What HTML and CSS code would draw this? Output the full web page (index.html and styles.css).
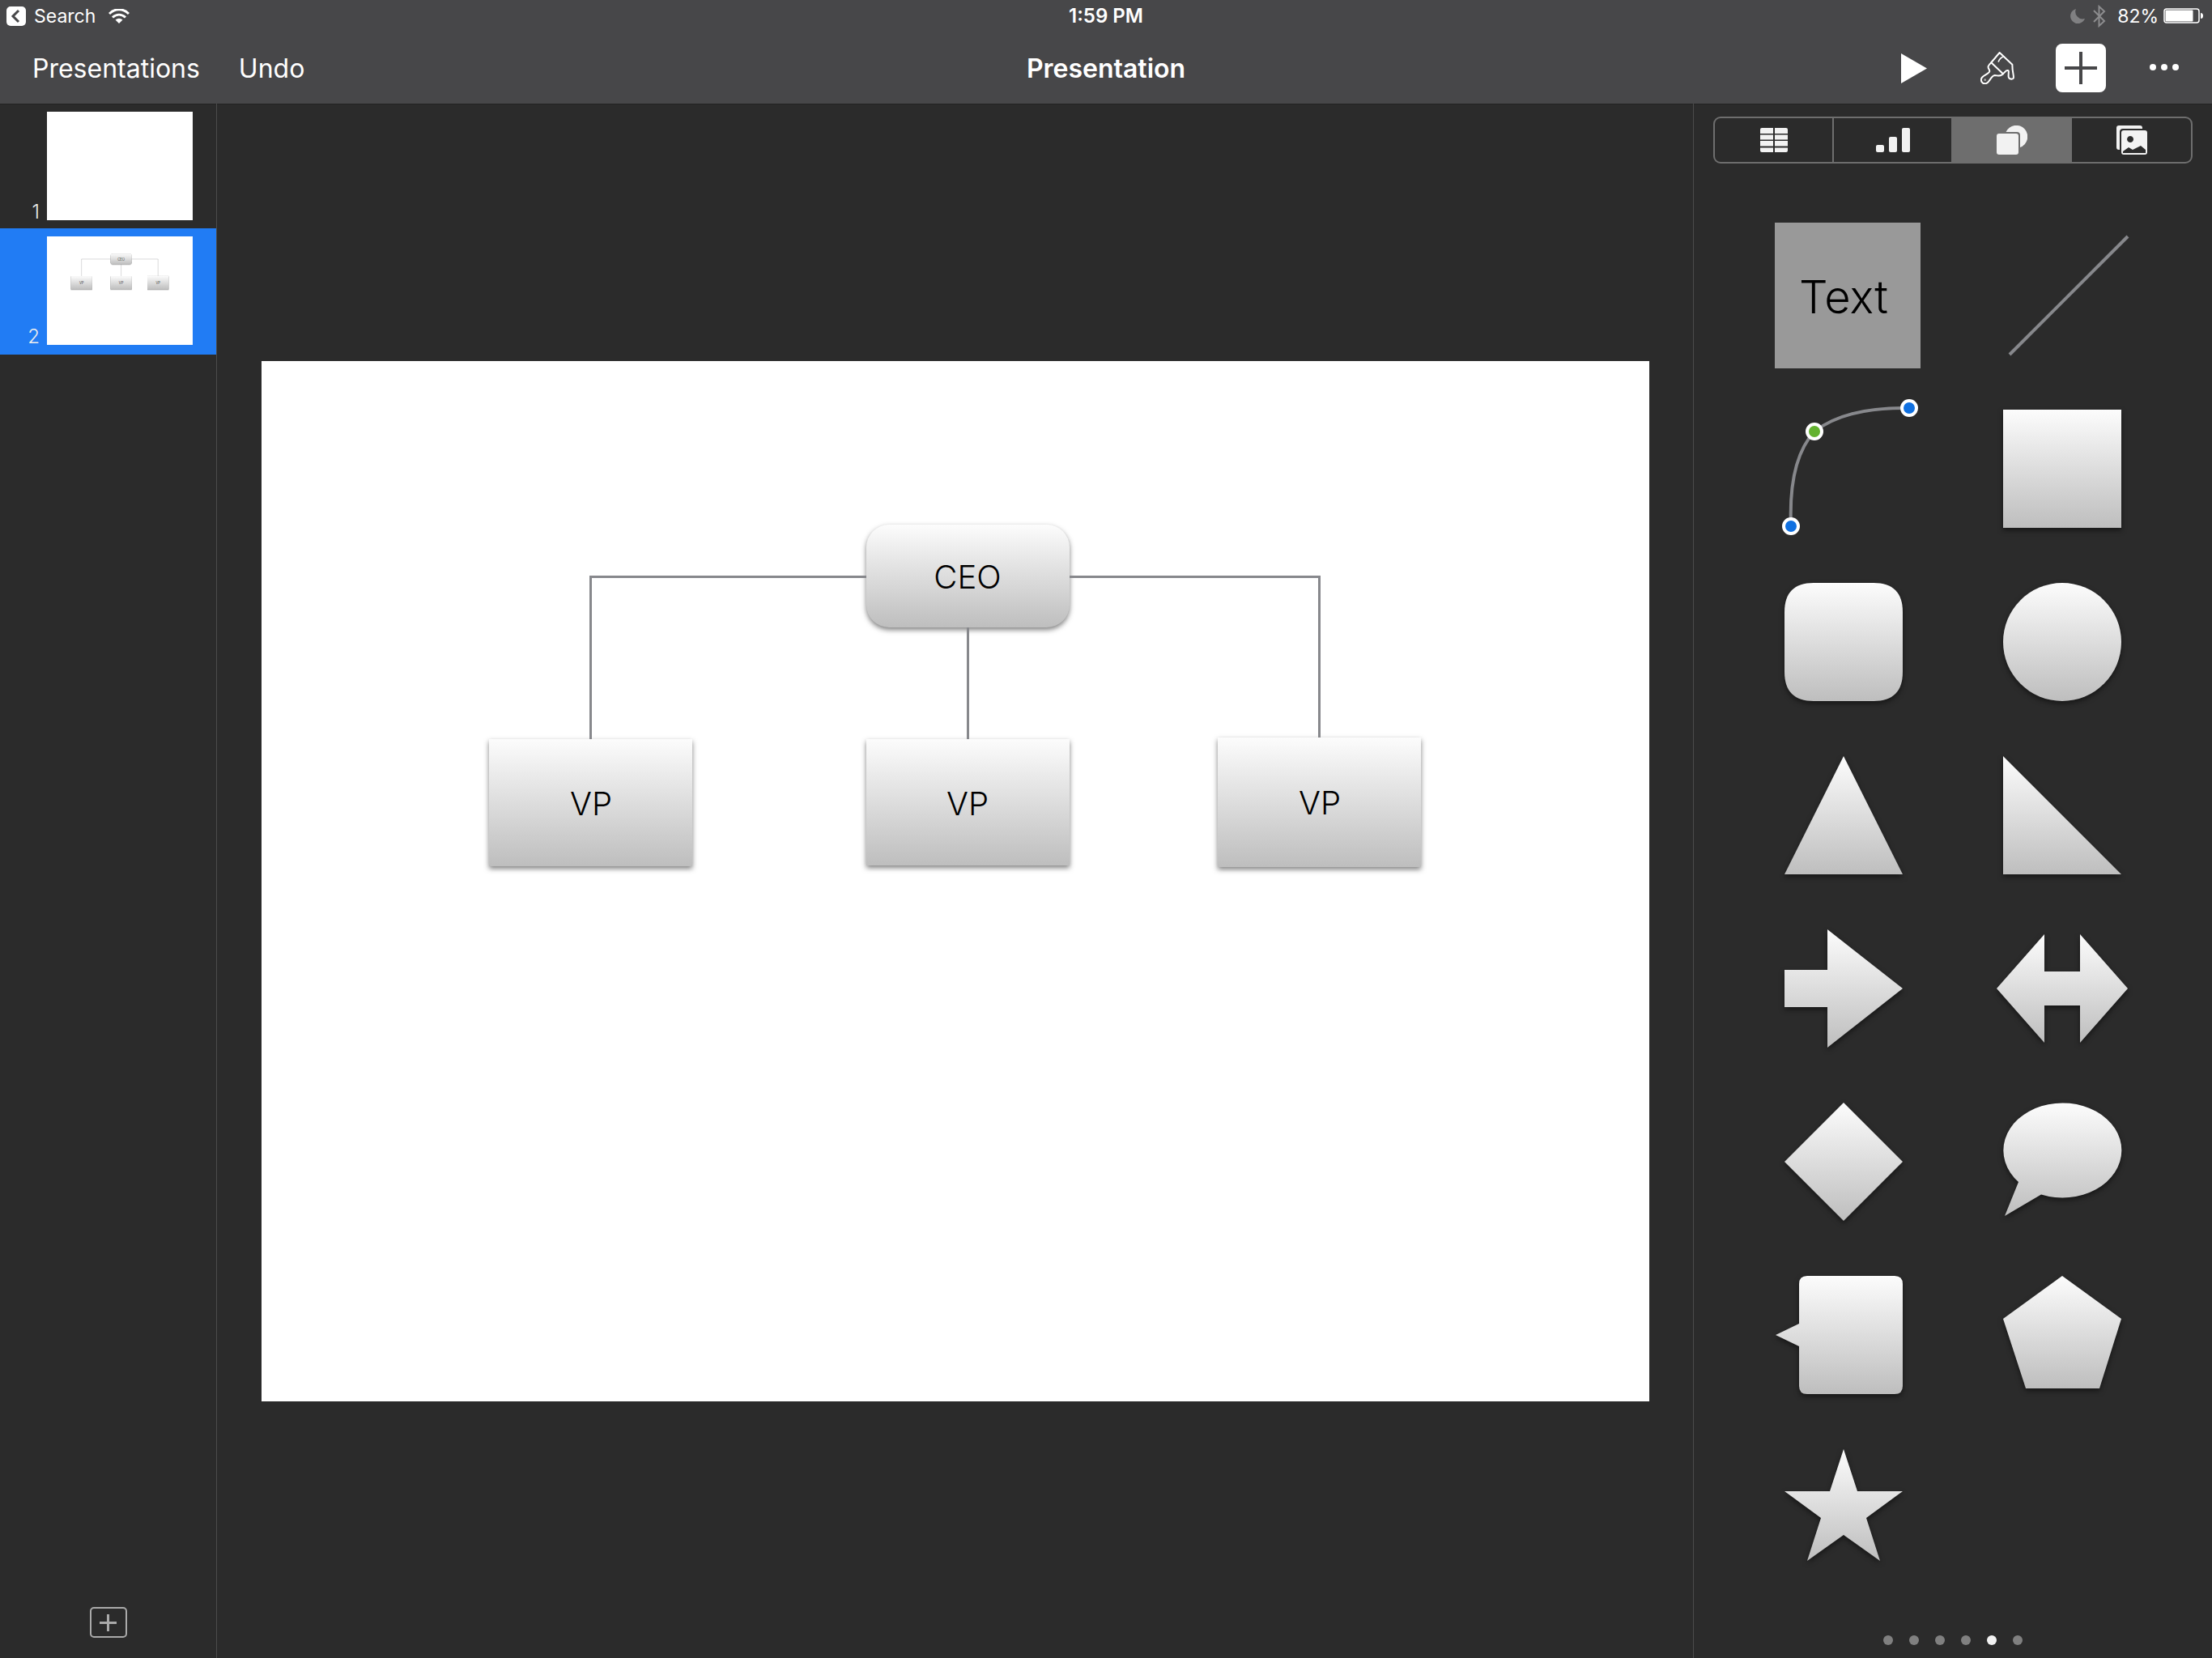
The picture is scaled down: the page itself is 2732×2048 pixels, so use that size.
FILE: index.html
```html
<!DOCTYPE html>
<html lang="en">
<head>
    <meta charset="UTF-8">
    <meta name="viewport" content="width=device-width, initial-scale=1.0">
    <title>Presentation</title>
    <link rel="stylesheet" href="styles.css">
</head>
<body>
    <!-- shared gradients and the org chart, drawn once and reused in the thumbnail -->
    <svg class="defs" width="0" height="0" aria-hidden="true">
        <defs>
            <linearGradient id="silver" x1="0" y1="0" x2="0" y2="1">
                <stop offset="0" stop-color="#fcfcfc"/>
                <stop offset="1" stop-color="#bebebe"/>
            </linearGradient>
            <symbol id="org-chart" viewBox="0 0 1714 1285">
                <g class="node">
                    <rect x="747" y="202" width="251" height="127" rx="28"/>
                    <rect x="281" y="467" width="251" height="157"/>
                    <rect x="747" y="467" width="251" height="156"/>
                    <rect x="1181" y="465" width="251" height="160"/>
                </g>
                <path class="connector" d="M747 266.500H406.500V467M998 266.500H1306.500V465M872.500 329V467"/>
                <g class="node-label">
                    <text x="872" y="281">CEO</text>
                    <text x="407" y="561">VP</text>
                    <text x="872" y="561">VP</text>
                    <text x="1307" y="560">VP</text>
                </g>
            </symbol>
        </defs>
    </svg>

    <header class="header">
        <div class="status-bar">
            <div class="status-left">
                <svg width="24" height="24" viewBox="0 0 24 24"><rect width="24" height="24" rx="5" fill="#fff"/><path d="M15 5L8 12l7 7" fill="none" stroke="#474749" stroke-width="3"/></svg>
                <a href="#" class="back-link">Search</a>
                <svg class="wifi" width="26" height="18" viewBox="0 0 26 18"><path d="M1 6C8-1 18-1 25 6M5 10.500c5-4.500 11-4.500 16 0" fill="none" stroke="#fff" stroke-width="3"/><path d="M13 18l-4.500-4.500q4.500-3.500 9 0z" fill="#fff"/></svg>
            </div>
            <div class="time">1:59 PM</div>
            <div class="status-right">
                <svg width="18" height="18" viewBox="0 0 18 18"><path d="M7 0A9.200 9.200 0 1 0 18 12A9 9 0 0 1 7 0z" fill="#808082"/></svg>
                <svg width="16" height="28" viewBox="0 0 16 28"><path d="M1 7l13 13-6.500 6V2L14 8 1 21" fill="none" stroke="#8c8c8e" stroke-width="2"/></svg>
                <span class="battery-level">82%</span>
                <svg width="50" height="20" viewBox="0 0 50 20"><rect x="1" y="1" width="43" height="17" rx="3" fill="none" stroke="#fff" stroke-width="1.500"/><rect x="2.500" y="2.500" width="34" height="14" rx="1" fill="#fff"/><path d="M46 6q3 0 3 3.500T46 13z" fill="#fff"/></svg>
            </div>
        </div>
        <div class="toolbar">
            <div class="toolbar-left">
                <button class="text-button">Presentations</button>
                <button class="text-button">Undo</button>
            </div>
            <h1 class="title">Presentation</h1>
            <div class="toolbar-right">
                <button class="icon-button" aria-label="Play">
                    <svg width="32" height="37" viewBox="0 0 32 37"><path d="M0 0l32 18.500L0 37z" fill="#fff"/></svg>
                </button>
                <button class="icon-button" aria-label="Format">
                    <svg width="42" height="40" viewBox="0 0 126 120"><g fill="none" stroke="#fff" stroke-width="6" stroke-linejoin="round" stroke-linecap="round"><path d="M71 3L118 47Q118 66 122 86C125 103 119 100 115 101C106 101 103 96 104 86C104 75 107 67 99 69C92 70 89 79 80 85C70 93 63 87 53 87C43 88 39 99 32 108C25 119 15 120 8 115C0 108 1 97 10 91C20 84 34 78 34 72C34 65 27 61 29 54Q31 48 38 42z"/><path d="M40 40L84 82"/><path d="M86 17Q71 23 67 36" stroke-width="5"/></g><circle cx="17" cy="104" r="4" fill="#aaa"/></svg>
                </button>
                <button class="icon-button active" aria-label="Insert">
                    <svg width="40" height="40" viewBox="0 0 40 40"><path d="M20 0v40M0 20h40" stroke="#474749" stroke-width="4"/></svg>
                </button>
                <button class="icon-button" aria-label="More">
                    <svg width="36" height="10" viewBox="0 0 36 10"><g fill="#fff"><circle cx="4" cy="4" r="4"/><circle cx="18" cy="4" r="4"/><circle cx="32" cy="4" r="4"/></g></svg>
                </button>
            </div>
        </div>
    </header>

    <div class="workspace">
        <nav class="navigator">
            <button class="slide-row">
                <span class="slide-number">1</span>
                <span class="thumb"></span>
            </button>
            <button class="slide-row selected">
                <span class="slide-number">2</span>
                <span class="thumb"><svg viewBox="0 0 1714 1285"><use href="#org-chart"/></svg></span>
            </button>
            <button class="add-slide" aria-label="Add slide">
                <svg width="21" height="21" viewBox="0 0 21 21"><path d="M10.500 0v21M0 10.500h21" stroke="#aaa" stroke-width="3"/></svg>
            </button>
        </nav>

        <main class="canvas">
            <div class="slide">
                <svg viewBox="0 0 1714 1285"><use href="#org-chart"/></svg>
            </div>
        </main>

        <aside class="inspector">
            <div class="segments">
                <button class="segment" aria-label="Tables">
                    <svg width="34" height="30" viewBox="0 0 34 30"><path d="M2 0h14v7H0V2q0-2 2-2zM18 0h14q2 0 2 2v5H18zM0 8.500h16v6H0zM18 8.500h16v6H18zM0 16h16v6.500H0zM18 16h16v6.500H18zM0 24.500h16V30H2q-2 0-2-2zM18 24.500h16V28q0 2-2 2H18z"/></svg>
                </button>
                <button class="segment" aria-label="Charts">
                    <svg width="42" height="30" viewBox="0 0 42 30"><rect y="21" width="10" height="9" rx="2"/><rect x="16" y="11" width="10" height="19" rx="2"/><rect x="32" width="10" height="30" rx="2"/></svg>
                </button>
                <button class="segment active" aria-label="Shapes">
                    <svg width="38" height="36" viewBox="0 0 38 36"><path d="M11.500 8A14 14 0 1 1 29 27V12q0-4-4-4z"/><rect y="10" width="27" height="26" rx="3"/></svg>
                </button>
                <button class="segment" aria-label="Media">
                    <svg width="38" height="36" viewBox="0 0 38 36"><path d="M3 0h26q3 0 3 3v1H8q-4 0-4 4v22H3q-3 0-3-3V3q0-3 3-3z"/><path fill-rule="evenodd" d="M9 6h26q3 0 3 3v24q0 3-3 3H9q-3 0-3-3V9q0-3 3-3zM17 13a4 4 0 1 0 .1 0zM8 34h28v-4l-6-5-10 5-5-3-7 5z"/></svg>
                </button>
            </div>

            <div class="shapes">
                <button class="shape" aria-label="Text box">
                    <span class="text-tile">Text</span>
                </button>
                <button class="shape" aria-label="Line">
                    <svg viewBox="0 0 146 146"><path class="stroke" d="M8 146L154 0"/></svg>
                </button>
                <button class="shape" aria-label="Curve">
                    <svg viewBox="0 0 146 146">
                        <path class="stroke" d="M8 144C6 95 13 53 37 27C60 9 97-3 154-2"/>
                        <g class="handle">
                            <circle cx="8" cy="144" r="9"/>
                            <circle class="mid" cx="37" cy="27" r="9"/>
                            <circle cx="154" cy="-2" r="9"/>
                        </g>
                    </svg>
                </button>
                <button class="shape" aria-label="Rectangle">
                    <svg class="solid" viewBox="0 0 146 146"><rect width="146" height="146"/></svg>
                </button>
                <button class="shape" aria-label="Rounded rectangle">
                    <svg class="solid" viewBox="0 0 146 146"><path d="M36 0H110C134 0 146 12 146 36V110C146 134 134 146 110 146H36C12 146 0 134 0 110V36C0 12 12 0 36 0z"/></svg>
                </button>
                <button class="shape" aria-label="Oval">
                    <svg class="solid" viewBox="0 0 146 146"><circle cx="73" cy="73" r="73"/></svg>
                </button>
                <button class="shape" aria-label="Triangle">
                    <svg class="solid" viewBox="0 0 146 146"><path d="M73 0l73 146H0z"/></svg>
                </button>
                <button class="shape" aria-label="Right triangle">
                    <svg class="solid" viewBox="0 0 146 146"><path d="M0 0l146 146H0z"/></svg>
                </button>
                <button class="shape" aria-label="Arrow">
                    <svg class="solid" viewBox="0 0 146 146"><path d="M0 50h53V0l93 73-93 73V96H0z"/></svg>
                </button>
                <button class="shape" aria-label="Double arrow">
                    <svg class="solid" viewBox="0 0 146 146"><path d="M-8 73L51 6v46h44V6l59 67-59 67V94H51v46z"/></svg>
                </button>
                <button class="shape" aria-label="Diamond">
                    <svg class="solid" viewBox="0 0 146 146"><path d="M73 0l73 73-73 73L0 73z"/></svg>
                </button>
                <button class="shape" aria-label="Speech bubble">
                    <svg class="solid" viewBox="0 0 146 146"><path d="M19 98A73 58.500 0 1 1 47 113.500L2 140z"/></svg>
                </button>
                <button class="shape" aria-label="Callout">
                    <svg class="solid" viewBox="0 0 146 146"><path d="M28 0h108q10 0 10 10v126q0 10-10 10H28q-10 0-10-10V87l-29-14 29-14V10Q18 0 28 0z"/></svg>
                </button>
                <button class="shape" aria-label="Pentagon">
                    <svg class="solid" viewBox="0 0 146 146"><path d="M73 0l73 53-27 86H28L0 53z"/></svg>
                </button>
                <button class="shape" aria-label="Star">
                    <svg class="solid" viewBox="0 0 146 146"><path d="M73 0l17 52h56l-45 33 17 53-45-32-45 32 17-53L0 52h56z"/></svg>
                </button>
            </div>

            <div class="pager">
                <button class="dot" aria-label="Page 1"></button>
                <button class="dot" aria-label="Page 2"></button>
                <button class="dot" aria-label="Page 3"></button>
                <button class="dot" aria-label="Page 4"></button>
                <button class="dot current" aria-label="Page 5"></button>
                <button class="dot" aria-label="Page 6"></button>
            </div>
        </aside>
    </div>
</body>
</html>
```

FILE: styles.css
```css
:root {
    --bar: #474749;
    --panel: #2b2b2b;
    --divider: #4c4c4c;
    --segment: #6e6e6e;
    --accent: #217cf4;
    --icon: #f2f2f2;
    --stroke: #87888c;
}

* {
    box-sizing: border-box;
}

body {
    display: flex;
    flex-direction: column;
    min-height: 100vh;
    margin: 0;
    background: var(--panel);
    color: #fff;
    font-family: Inter, 'Liberation Sans', sans-serif;
}

button {
    padding: 0;
    border: none;
    background: none;
    color: inherit;
    font: inherit;
    cursor: pointer;
}

svg {
    display: block;
}

.defs {
    position: absolute;
}

/* Header */
.header {
    background: var(--bar);
    box-shadow: 0 1px #232323;
}

.status-bar,
.toolbar {
    display: grid;
    grid-template-columns: 1fr auto 1fr;
    align-items: center;
}

.status-bar {
    height: 40px;
    font-size: 23px;
    line-height: 40px;
}

.status-left,
.status-right {
    display: flex;
    align-items: center;
    gap: 10px;
}

.status-left {
    padding-left: 8px;
}

.status-right {
    justify-content: flex-end;
    padding-right: 10px;
}

.back-link {
    color: inherit;
    text-decoration: none;
}

.wifi {
    margin-left: 6px;
}

.time {
    font-size: 24px;
    font-weight: 600;
}

.battery-level {
    margin: 0 -4px 0 4px;
}

.toolbar {
    height: 88px;
    font-size: 32px;
}

.toolbar-left {
    display: flex;
    gap: 48px;
    padding-left: 40px;
}

.title {
    margin: 0;
    font-size: 32px;
    font-weight: 600;
}

.toolbar-right {
    display: flex;
    justify-content: flex-end;
    gap: 41px;
    padding-right: 28px;
}

.icon-button {
    display: flex;
    align-items: center;
    justify-content: center;
    width: 62px;
    height: 60px;
    border-radius: 8px;
}

.icon-button.active {
    background: #fff;
}

.workspace {
    display: flex;
    flex: 1;
}

/* Slide navigator */
.navigator {
    display: flex;
    flex-direction: column;
    width: 268px;
    border-right: 1px solid var(--divider);
}

.slide-row {
    display: flex;
    align-items: flex-end;
    gap: 9px;
    padding: 10px 29px 10px 0;
}

.slide-row.selected {
    padding-bottom: 12px;
    background: var(--accent);
}

.slide-number {
    flex: 1;
    color: #eee;
    font-size: 24px;
    font-weight: 300;
    line-height: 20px;
    text-align: right;
}

.thumb {
    width: 180px;
    height: 134px;
    background: #fff;
}

.add-slide {
    display: flex;
    align-items: center;
    justify-content: center;
    width: 46px;
    height: 38px;
    margin: auto auto 25px;
    border: 2px solid #aaa;
    border-radius: 5px;
}

/* Slide canvas */
.canvas {
    display: flex;
    flex: 1;
    align-items: center;
    padding: 0 54px 0 55px;
}

.slide {
    flex: 1;
    background: #fff;
}

.node {
    fill: url(#silver);
    filter: drop-shadow(0 3px 3px rgba(0, 0, 0, 0.5));
}

.connector {
    fill: none;
    stroke: var(--stroke);
    stroke-width: 3;
}

.node-label {
    fill: #000;
    font-size: 40px;
    font-weight: 300;
    text-anchor: middle;
}

/* Inspector */
.inspector {
    display: flex;
    flex-direction: column;
    width: 641px;
    border-left: 1px solid var(--divider);
}

.segments {
    display: grid;
    grid-template-columns: repeat(4, 1fr);
    height: 58px;
    margin: 16px 24px 0;
    overflow: hidden;
    border: 2px solid var(--segment);
    border-radius: 9px;
}

.segment {
    display: flex;
    align-items: center;
    justify-content: center;
    border-right: 2px solid var(--segment);
    fill: var(--icon);
}

.segment:last-child {
    border-right: none;
}

.segment.active {
    background: var(--segment);
}

.shapes {
    display: grid;
    grid-template-columns: 1fr 1fr;
    grid-auto-rows: 214px;
    padding: 56px 50px 0;
}

.shape {
    display: flex;
    align-items: center;
    justify-content: center;
}

.shape svg {
    width: 146px;
    height: 146px;
    overflow: visible;
}

.solid {
    fill: url(#silver);
    filter: drop-shadow(0 3px 3px rgba(0, 0, 0, 0.5));
}

.stroke {
    fill: none;
    stroke: var(--stroke);
    stroke-width: 4;
}

.handle {
    fill: #1070e0;
    stroke: #fff;
    stroke-width: 4;
}

.handle .mid {
    fill: #63b22f;
}

.text-tile {
    width: 180px;
    height: 180px;
    margin-left: 10px;
    padding-right: 10px;
    background: #999;
    color: #000;
    font-size: 56px;
    font-weight: 300;
    line-height: 184px;
}

.pager {
    display: flex;
    justify-content: center;
    gap: 20px;
    margin: auto 0 16px;
}

.dot {
    width: 12px;
    height: 12px;
    border-radius: 50%;
    background: #808080;
}

.dot.current {
    background: var(--icon);
}
```
